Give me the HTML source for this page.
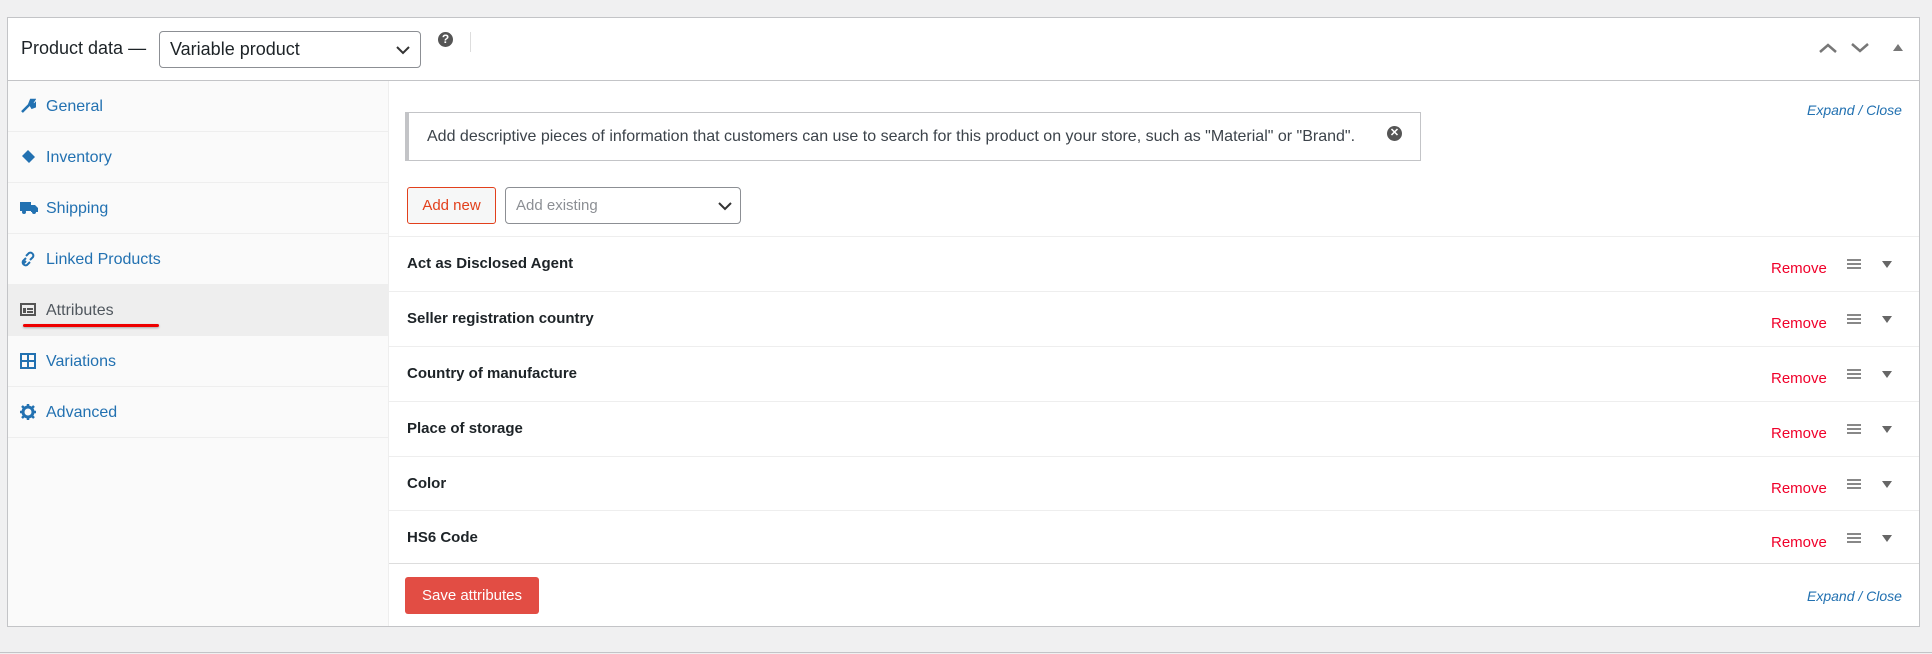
<!DOCTYPE html>
<html><head><meta charset="utf-8"><style>
*{box-sizing:border-box;margin:0;padding:0}
body{width:1932px;height:654px;background:#f0f0f1;font-family:"Liberation Sans",sans-serif;position:relative;overflow:hidden}
.abs{position:absolute}
.panel{left:7px;top:17px;width:1913px;height:610px;background:#fff;border:1px solid #c3c4c7}
.hdr{left:0;top:0;width:1911px;height:63px;border-bottom:1px solid #c3c4c7}
.nav{left:0;top:63px;width:381px;height:545px;background:#fafafa;border-right:1px solid #eee}
.nav div{position:absolute;left:0;width:380px;height:51px;border-bottom:1px solid #eee;color:#2271b1;font-size:16px;line-height:51px;padding-left:38px}
.nav svg{position:absolute;left:12px;top:17px}
.row{position:absolute;left:381px;width:1530px;height:55px;border-top:1px solid #eee;font-weight:bold;font-size:15px;color:#1d2327;padding-left:18px;line-height:54px}
.rm{position:absolute;left:1382px;top:2px;color:#f0002a;font-weight:normal;font-size:15px}
.hb{position:absolute;left:1458px;top:22px;width:14px;height:10px;border-top:2px solid #888;border-bottom:2px solid #888}
.hb:after{content:"";position:absolute;left:0;top:2px;width:14px;height:2px;background:#888}
.tri{position:absolute;left:1493px;top:24px;border-left:5px solid transparent;border-right:5px solid transparent;border-top:7px solid #666}
.ex{color:#2271b1;font-style:italic;font-size:14px}
</style></head><body>
<div class="abs panel">
 <div class="abs hdr">
  <div class="abs" style="left:13px;top:20px;font-size:18px;color:#1d2327">Product data —</div>
  <div class="abs" style="left:151px;top:13px;width:262px;height:37px;border:1px solid #8c8f94;border-radius:4px;font-size:18px;line-height:35px;padding-left:10px;color:#1d2327">Variable product
   <svg class="abs" style="left:236px;top:13px" width="14" height="10"><path d="M1 2l6 6 6-6" stroke="#333" stroke-width="2" fill="none"/></svg></div>
  <div class="abs" style="left:430px;top:14px;width:15px;height:15px;border-radius:50%;background:#555;color:#fff;font-size:12px;font-weight:bold;text-align:center;line-height:15px">?</div>
  <div class="abs" style="left:462px;top:14px;width:1px;height:20px;background:#ddd"></div>
  <svg class="abs" style="left:1810px;top:24px" width="20" height="12"><path d="M2 10l8-7 8 7" stroke="#777" stroke-width="2.5" fill="none"/></svg>
  <svg class="abs" style="left:1842px;top:24px" width="20" height="12"><path d="M2 2l8 7 8-7" stroke="#777" stroke-width="2.5" fill="none"/></svg>
  <div class="abs" style="left:1885px;top:26px;border-left:5px solid transparent;border-right:5px solid transparent;border-bottom:7px solid #777"></div>
 </div>
 <div class="abs nav">
  <div style="top:0">General<svg width="16" height="16"><path d="M2 14l7-7M9 7l2-5 3 0-2 3 2 2 2-2 0 3-5 2" stroke="#2271b1" stroke-width="2.5" fill="#2271b1"/></svg></div>
  <div style="top:51px">Inventory<svg width="16" height="16"><path d="M2 7l6-6 7 7-6 6z" fill="#2271b1"/></svg></div>
  <div style="top:102px">Shipping<svg width="18" height="16"><rect x="0" y="2" width="11" height="9" fill="#2271b1"/><path d="M11 5h4l3 3v4h-7z" fill="#2271b1"/><circle cx="4" cy="12" r="2" fill="#2271b1"/><circle cx="14" cy="12" r="2" fill="#2271b1"/></svg></div>
  <div style="top:153px">Linked Products<svg width="16" height="16"><path d="M3 13l3-3M6 5l3-3a3 3 0 0 1 4 4l-3 3M10 11l-3 3a3 3 0 0 1-4-4l3-3" stroke="#2271b1" stroke-width="2" fill="none"/></svg></div>
  <div style="top:204px;background:#eee;color:#50575e">Attributes<svg width="16" height="16"><rect x="1" y="2" width="14" height="11" fill="none" stroke="#555" stroke-width="2"/><rect x="3" y="6" width="3" height="5" fill="#555"/><rect x="7" y="6" width="6" height="2" fill="#555"/><rect x="7" y="9" width="6" height="2" fill="#555"/></svg>
   <span style="position:absolute;left:15px;top:39px;width:136px;height:3px;background:#e00;border-radius:2px;box-shadow:0 1px 2px rgba(0,0,0,.3)"></span></div>
  <div style="top:255px">Variations<svg width="16" height="16"><rect x="1" y="1" width="14" height="14" fill="none" stroke="#2271b1" stroke-width="2"/><path d="M8 1v14M1 8h14" stroke="#2271b1" stroke-width="2"/></svg></div>
  <div style="top:306px">Advanced<svg width="16" height="16"><circle cx="8" cy="8" r="5" fill="none" stroke="#2271b1" stroke-width="3"/><path d="M8 0v4M8 12v4M0 8h4M12 8h4M2 2l3 3M11 11l3 3M14 2l-3 3M2 14l3-3" stroke="#2271b1" stroke-width="2.5"/></svg></div>
 </div>
 <div class="abs ex" style="left:1799px;top:84px">Expand / Close</div>
 <div class="abs" style="left:397px;top:94px;width:1016px;height:49px;border:1px solid #c3c4c7;border-left:4px solid #c3c4c7;font-size:16px;color:#3c434a;line-height:47px;padding-left:18px;white-space:nowrap">Add descriptive pieces of information that customers can use to search for this product on your store, such as "Material" or "Brand".
  <div class="abs" style="left:978px;top:13px;width:15px;height:15px;border-radius:50%;background:#555;color:#fff;font-size:11px;font-weight:bold;text-align:center;line-height:15px">✕</div></div>
 <div class="abs" style="left:399px;top:169px;width:89px;height:37px;border:1px solid #e2401c;border-radius:3px;background:#f6f7f7;color:#e2401c;font-size:15px;line-height:35px;text-align:center">Add new</div>
 <div class="abs" style="left:497px;top:169px;width:236px;height:37px;border:1px solid #8c8f94;border-radius:4px;color:#8c8f94;font-size:15px;line-height:35px;padding-left:10px">Add existing
  <svg class="abs" style="left:212px;top:13px" width="14" height="10"><path d="M1 2l6 6 6-6" stroke="#333" stroke-width="2" fill="none"/></svg></div>
 <div class="row" style="top:218px">Act as Disclosed Agent<span class="rm" style="top:5px">Remove</span><span class="hb"></span><span class="tri"></span></div>
 <div class="row" style="top:273px">Seller registration country<span class="rm" style="top:5px">Remove</span><span class="hb"></span><span class="tri"></span></div>
 <div class="row" style="top:328px">Country of manufacture<span class="rm" style="top:5px">Remove</span><span class="hb"></span><span class="tri"></span></div>
 <div class="row" style="top:383px">Place of storage<span class="rm" style="top:5px">Remove</span><span class="hb"></span><span class="tri"></span></div>
 <div class="row" style="top:438px">Color<span class="rm" style="top:5px">Remove</span><span class="hb"></span><span class="tri"></span></div>
 <div class="row" style="top:492px">HS6 Code<span class="rm" style="top:5px">Remove</span><span class="hb"></span><span class="tri"></span></div>
 <div class="abs" style="left:381px;top:545px;width:1530px;height:1px;background:#ddd"></div>
 <div class="abs" style="left:397px;top:559px;width:134px;height:37px;background:#e24d44;border-radius:3px;color:#fff;font-size:15px;line-height:37px;text-align:center">Save attributes</div>
 <div class="abs ex" style="left:1799px;top:570px">Expand / Close</div>
</div>
<div class="abs" style="left:0;top:652px;width:1932px;height:1px;background:#c3c4c7"></div>
</body></html>
